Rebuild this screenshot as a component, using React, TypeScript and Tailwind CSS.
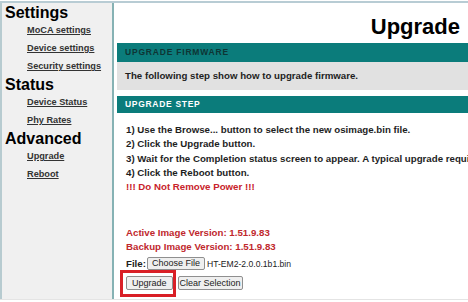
import React from "react";

const F = { fontFamily: "'Liberation Sans', Arial, sans-serif" };

function NavHead({ children, h = "h-[18px]" }: { children: React.ReactNode; h?: string }) {
  return <div className={"pl-[3px] flex items-center text-[16px] leading-[18px] font-bold text-black " + h}>{children}</div>;
}
function NavLink({ children }: { children: React.ReactNode }) {
  return (
    <div className="pl-[25px] h-[18px] flex items-center">
      <a className="text-[9.2px] font-bold text-[#333333] underline whitespace-nowrap">{children}</a>
    </div>
  );
}

function Btn({ children, className = "" }: { children: React.ReactNode; className?: string }) {
  return (
    <span
      className={
        "flex items-center text-[9px] text-[#222] bg-[#efefef] border border-[#8f8f8f] rounded-[2px] whitespace-nowrap " +
        className
      }
    >
      {children}
    </span>
  );
}

export default function App() {
  return (
    <div style={F} className="w-[468px] h-[302px] overflow-hidden bg-white">
      <div className="mt-[1px] h-[299px] border-t-2 border-b border-t-[#b8ccd4] border-b-[#e4e4e4] flex">
        <div className="w-[114px] shrink-0 bg-[#f0f0f0] border-l-2 border-r-2 border-l-[#b7cbd0] border-r-[#86b2b4]">
          <NavHead h="h-[19px]">Settings</NavHead>
          <NavLink>MoCA settings</NavLink>
          <NavLink>Device settings</NavLink>
          <NavLink>Security settings</NavLink>
          <NavHead>Status</NavHead>
          <NavLink>Device Status</NavLink>
          <NavLink>Phy Rates</NavLink>
          <NavHead>Advanced</NavHead>
          <NavLink>Upgrade</NavLink>
          <NavLink>Reboot</NavLink>
        </div>
        <div className="flex-1 min-w-0 overflow-hidden pl-[3px]">
          <div className="h-[40px] flex items-end justify-end pr-[8px] pb-[5px]">
            <span className="text-[22px] font-bold text-black leading-none">Upgrade</span>
          </div>
          <div className="h-[19px] bg-[#0b7c7b] flex items-center pl-[8px]">
            <span className="text-[8.5px] font-bold tracking-[0.8px] text-[#0e3534]">UPGRADE FIRMWARE</span>
          </div>
          <div className="h-[28px] bg-[#e1e1e1] flex items-center pl-[8px]">
            <span className="text-[9.7px] font-bold text-[#1e1e1e] whitespace-nowrap">The following step show how to upgrade firmware.</span>
          </div>
          <div className="h-[6px]" />
          <div className="h-[17px] bg-[#0b7c7b] flex items-center pl-[8px]">
            <span className="text-[8.5px] font-bold tracking-[0.7px] text-white">UPGRADE STEP</span>
          </div>
          <div className="pl-[9px] pt-[10px] text-[9.7px] font-bold leading-[14.3px] whitespace-nowrap text-[#1e1e1e]">
            <div>1) Use the Browse... button to select the new osimage.bin file.</div>
            <div>2) Click the Upgrade button.</div>
            <div>3) Wait for the Completion status screen to appear. A typical upgrade requires about 2 minutes.</div>
            <div>4) Click the Reboot button.</div>
            <div className="text-[#c8232b]">!!! Do Not Remove Power !!!</div>
          </div>
          <div className="pl-[9px] pt-[32px] text-[9.7px] font-bold leading-[14px] text-[#c0282d]">
            <div>Active Image Version: 1.51.9.83</div>
            <div>Backup Image Version: 1.51.9.83</div>
          </div>
          <div className="pl-[9px] mt-[3px] flex items-center h-[13px]">
            <span className="text-[9.7px] font-bold text-[#1e1e1e]">File:</span>
            <Btn className="ml-[1px] h-[13px] px-[4px]">Choose File</Btn>
            <span className="ml-[2px] text-[8.6px] text-[#222] whitespace-nowrap">HT-EM2-2.0.0.1b1.bin</span>
          </div>
          <div className="pl-[3px] flex items-center gap-[2px]">
            <div className="border-[3px] border-[#d91f26] pl-[3px] pr-0 pt-[3px] pb-[4px]">
              <Btn className="h-[14px] px-[5px]">Upgrade</Btn>
            </div>
            <Btn className="h-[14px] px-[1px] mb-[1px]">Clear Selection</Btn>
          </div>
        </div>
      </div>
    </div>
  );
}
